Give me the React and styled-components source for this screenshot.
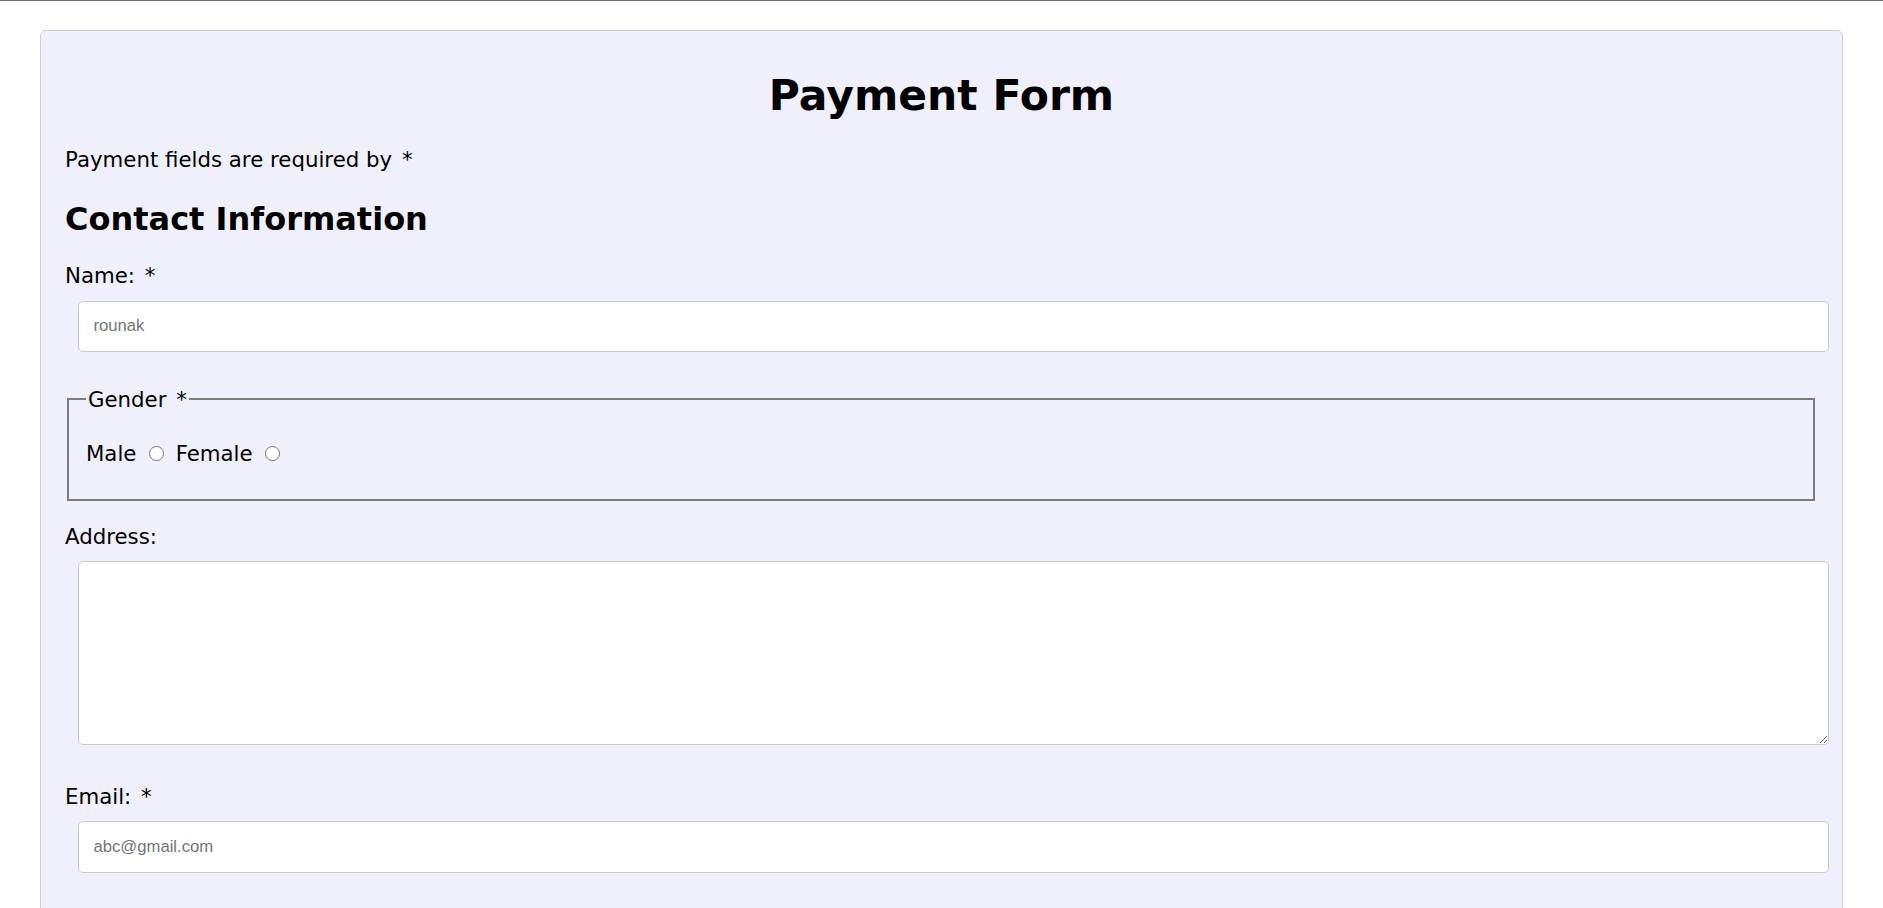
import React from "react";
import styled, { createGlobalStyle } from "styled-components";

const GlobalStyle = createGlobalStyle`
  html {
    border-top: 1px solid #6b6b6b;
  }
  body {
    margin: 0;
    overflow: hidden;
    background: #ffffff;
    font-family: "DejaVu Sans", Verdana, sans-serif;
    color: #000000;
  }
`;

const Card = styled.form`
  margin: 29px 40px 0;
  padding: 40px 24px 120px;
  background: #f0f0fc;
  border: 1px solid #cfcfd6;
  border-radius: 6px;
  font-size: 21.3px;
`;

const Title = styled.h1`
  margin: 0 0 26px;
  font-size: 42.5px;
  line-height: 50px;
  font-weight: bold;
  text-align: center;
`;

const Note = styled.p`
  margin: 0 0 28px;
  line-height: 25px;
`;

const SectionTitle = styled.h2`
  margin: 0 0 25px;
  font-size: 32px;
  line-height: 38px;
  font-weight: bold;
`;

const Required = styled.span`
  margin-left: 3px;
`;

const Label = styled.label`
  display: block;
  line-height: 25px;
  margin-top: ${(p) => p.$gap || 0}px;
`;

const fieldBase = `
  display: block;
  box-sizing: border-box;
  width: calc(100% - 2px);
  margin: 12.5px 0 0 12.5px;
  padding: 0 15px;
  background: #ffffff;
  border: 1px solid #c9c9cf;
  border-radius: 5px;
  font-family: "Liberation Sans", Arial, sans-serif;
  font-size: 16.67px;
  color: #000000;
  outline: none;
  &::placeholder {
    color: #757575;
  }
`;

const TextInput = styled.input`
  ${fieldBase}
  height: 51.5px;
`;

const TextArea = styled.textarea`
  ${fieldBase}
  height: 184px;
  padding: 12px 15px;
  resize: both;
`;

const GenderSet = styled.fieldset`
  margin: 34.5px 3px 0 1.5px;
  padding: 29px 17.5px 33.5px;
  border: 2px solid #7b7b7b;
  min-width: 0;
`;

const Legend = styled.legend`
  padding: 0 2px;
  line-height: normal;
`;

const RadioRow = styled.div`
  line-height: 25px;
  white-space: nowrap;
`;

const RadioText = styled.label``;

const Radio = styled.input.attrs({ type: "radio" })`
  appearance: none;
  display: inline-block;
  box-sizing: border-box;
  width: 14.7px;
  height: 14.7px;
  margin: 0 12px 0 12.5px;
  border: 1px solid #767676;
  border-radius: 50%;
  background: #ffffff;
  vertical-align: baseline;
`;

export default function App() {
  return (
    <>
      <GlobalStyle />
      <Card onSubmit={(e) => e.preventDefault()}>
        <Title>Payment Form</Title>
        <Note>
          Payment fields are required by<Required> *</Required>
        </Note>
        <SectionTitle>Contact Information</SectionTitle>

        <Label htmlFor="name">
          Name:<Required> *</Required>
        </Label>
        <TextInput id="name" type="text" placeholder="rounak" />

        <GenderSet>
          <Legend>
            Gender<Required> *</Required>
          </Legend>
          <RadioRow>
            <RadioText htmlFor="male">Male</RadioText>
            <Radio id="male" name="gender" value="male" />
            <RadioText htmlFor="female">Female</RadioText>
            <Radio id="female" name="gender" value="female" />
          </RadioRow>
        </GenderSet>

        <Label htmlFor="address" $gap={22.5}>
          Address:
        </Label>
        <TextArea id="address" />

        <Label htmlFor="email" $gap={38.5}>
          Email:<Required> *</Required>
        </Label>
        <TextInput id="email" type="email" placeholder="abc@gmail.com" />
      </Card>
    </>
  );
}
